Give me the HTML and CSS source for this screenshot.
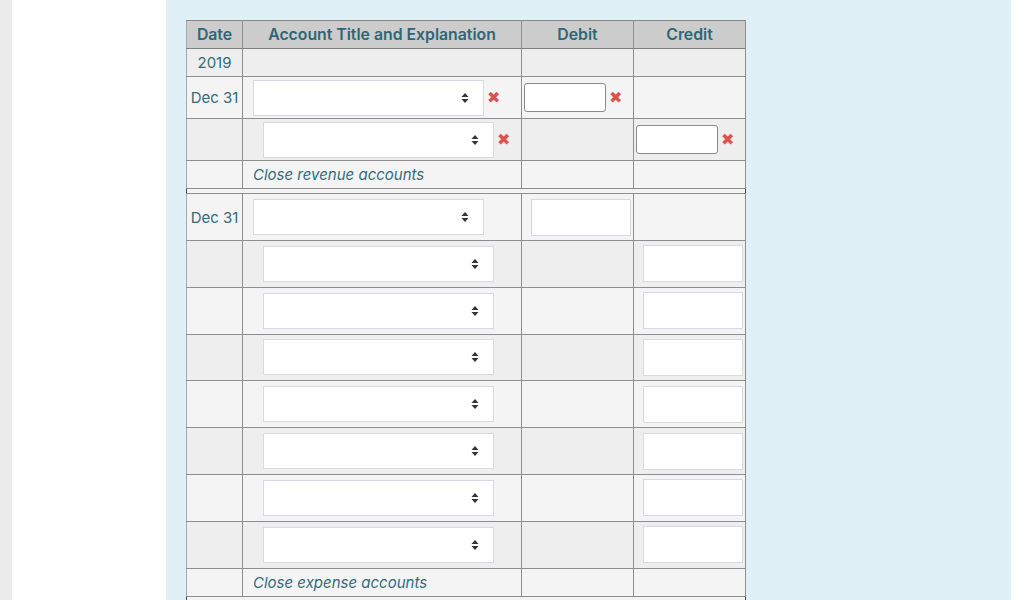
FILE: index.html
```html
<!DOCTYPE html>
<html>
<head>
<meta charset="utf-8">
<link rel="stylesheet" href="styles.css">
</head>
<body>
<div class="page">
  <div class="gutter"></div>
  <div class="side"></div>
  <div class="main">
    <table class="journal">
      <colgroup>
        <col class="c-date"><col class="c-acct"><col class="c-amt"><col class="c-amt">
      </colgroup>
      <thead>
        <tr class="head"><th>Date</th><th>Account Title and Explanation</th><th>Debit</th><th>Credit</th></tr>
      </thead>
      <tbody>
        <tr class="short alt"><td class="date">2019</td><td></td><td></td><td></td></tr>
        <tr class="r42"><td class="date">Dec 31</td>
          <td><div class="ctl"><div class="sel"><svg class="arr" width="8" height="12" viewBox="0 0 8 12"><path d="M4 1 L7.5 5 H0.5 Z M4 11 L7.5 7 H0.5 Z" fill="#333"/></svg></div><span class="x">✖</span></div></td>
          <td><div class="ctl a1"><div class="inp dark"></div><span class="x">✖</span></div></td>
          <td></td></tr>
        <tr class="r42 alt"><td class="date"></td>
          <td><div class="ctl ind"><div class="sel"><svg class="arr" width="8" height="12" viewBox="0 0 8 12"><path d="M4 1 L7.5 5 H0.5 Z M4 11 L7.5 7 H0.5 Z" fill="#333"/></svg></div><span class="x">✖</span></div></td>
          <td></td>
          <td><div class="ctl a1"><div class="inp dark"></div><span class="x">✖</span></div></td></tr>
        <tr class="short"><td class="date"></td><td class="expl">Close revenue accounts</td><td></td><td></td></tr>
        <tr class="sep"><td colspan="4"></td></tr>
        <tr class="r47"><td class="date">Dec 31</td>
          <td><div class="ctl"><div class="sel"><svg class="arr" width="8" height="12" viewBox="0 0 8 12"><path d="M4 1 L7.5 5 H0.5 Z M4 11 L7.5 7 H0.5 Z" fill="#333"/></svg></div></div></td>
          <td><div class="ctl a2"><div class="inp"></div></div></td>
          <td></td></tr>
        <tr class="r46 alt"><td class="date"></td><td><div class="ctl ind"><div class="sel"><svg class="arr" width="8" height="12" viewBox="0 0 8 12"><path d="M4 1 L7.5 5 H0.5 Z M4 11 L7.5 7 H0.5 Z" fill="#333"/></svg></div></div></td><td></td><td><div class="ctl a2"><div class="inp"></div></div></td></tr>
        <tr class="r46"><td class="date"></td><td><div class="ctl ind"><div class="sel"><svg class="arr" width="8" height="12" viewBox="0 0 8 12"><path d="M4 1 L7.5 5 H0.5 Z M4 11 L7.5 7 H0.5 Z" fill="#333"/></svg></div></div></td><td></td><td><div class="ctl a2"><div class="inp"></div></div></td></tr>
        <tr class="r46 alt"><td class="date"></td><td><div class="ctl ind"><div class="sel"><svg class="arr" width="8" height="12" viewBox="0 0 8 12"><path d="M4 1 L7.5 5 H0.5 Z M4 11 L7.5 7 H0.5 Z" fill="#333"/></svg></div></div></td><td></td><td><div class="ctl a2"><div class="inp"></div></div></td></tr>
        <tr class="r46"><td class="date"></td><td><div class="ctl ind"><div class="sel"><svg class="arr" width="8" height="12" viewBox="0 0 8 12"><path d="M4 1 L7.5 5 H0.5 Z M4 11 L7.5 7 H0.5 Z" fill="#333"/></svg></div></div></td><td></td><td><div class="ctl a2"><div class="inp"></div></div></td></tr>
        <tr class="r46 alt"><td class="date"></td><td><div class="ctl ind"><div class="sel"><svg class="arr" width="8" height="12" viewBox="0 0 8 12"><path d="M4 1 L7.5 5 H0.5 Z M4 11 L7.5 7 H0.5 Z" fill="#333"/></svg></div></div></td><td></td><td><div class="ctl a2"><div class="inp"></div></div></td></tr>
        <tr class="r46"><td class="date"></td><td><div class="ctl ind"><div class="sel"><svg class="arr" width="8" height="12" viewBox="0 0 8 12"><path d="M4 1 L7.5 5 H0.5 Z M4 11 L7.5 7 H0.5 Z" fill="#333"/></svg></div></div></td><td></td><td><div class="ctl a2"><div class="inp"></div></div></td></tr>
        <tr class="r46 alt"><td class="date"></td><td><div class="ctl ind"><div class="sel"><svg class="arr" width="8" height="12" viewBox="0 0 8 12"><path d="M4 1 L7.5 5 H0.5 Z M4 11 L7.5 7 H0.5 Z" fill="#333"/></svg></div></div></td><td></td><td><div class="ctl a2"><div class="inp"></div></div></td></tr>
        <tr class="short"><td class="date"></td><td class="expl">Close expense accounts</td><td></td><td></td></tr>
        <tr class="sep"><td colspan="4"></td></tr>
        <tr class="r47"><td class="date"></td><td></td><td></td><td></td></tr>
      </tbody>
    </table>
  </div>
  <div class="right"></div>
</div>
</body>
</html>
```
FILE: styles.css
```css
html, body {
  margin: 0;
  padding: 0;
  height: 100%;
  overflow: hidden;
}
body {
  font-family: Inter, "Liberation Sans", sans-serif;
  color: #336b7b;
}
.page {
  display: flex;
  height: 600px;
  box-shadow: inset 0 2px 3px rgba(0,0,0,0.05);
}
.gutter {
  width: 12px;
  background: #ebebeb;
  flex: none;
}
.side {
  width: 154px;
  background: #ffffff;
  flex: none;
}
.main {
  width: 825px;
  flex: none;
  background: #dff1f7;
  padding: 20px 0 0 20px;
}
.right {
  flex: 1;
  background: #ffffff;
}
.journal {
  border-collapse: collapse;
  table-layout: fixed;
  width: 560px;
  border: 1px solid #444;
  font-size: 15px;
}
.c-date { width: 56px; }
.c-acct { width: 279px; }
.c-amt { width: 112px; }
.journal th, .journal td {
  padding: 0;
  border: 1px solid #8e8e8e;
  border-top-color: #888;
  border-left-color: #a8a8a8;
  background: #f4f4f4;
  vertical-align: middle;
}
.journal .head th {
  background: #cccccc;
  height: 27px;
  font-weight: 600;
  font-size: 15.8px;
  text-align: center;
  color: #2e6676;
  border-bottom: 1px solid #808080;
}
.journal tr.alt td { background: #eeeeee; }
.short td { height: 27px; }
.r42 td { height: 41px; }
.r46 td { height: 45.8px; }
.r47 td { height: 46px; }
.sep td { height: 4px; background: #f4f4f4; border-left: none; border-right: none; }
.date { text-align: center; }
.expl {
  font-style: italic;
  padding-left: 10px !important;
}
.ctl {
  display: flex;
  align-items: center;
  margin-left: 10px;
}
.ctl.ind { margin-left: 20px; }
.ctl.a1 { margin-left: 2px; }
.ctl.a2 { margin-left: 9px; }
.sel {
  width: 231px;
  height: 36px;
  background: #fff;
  border: 1px solid #d5dbe0;
  display: flex;
  align-items: center;
  justify-content: flex-end;
  padding-right: 14px;
  box-sizing: border-box;
}
.arr { display: block; }
.x {
  color: #d9534f;
  font-family: "DejaVu Sans", sans-serif;
  font-size: 16px;
  font-weight: bold;
  margin-left: 3px;
  line-height: 1;
}
.inp {
  width: 100px;
  height: 37px;
  background: #fff;
  border: 1px solid #d5dbe0;
  box-sizing: border-box;
}
.inp.dark {
  width: 82px;
  height: 29px;
  border: 1px solid #8a8a8a;
  border-radius: 3px;
}
```
